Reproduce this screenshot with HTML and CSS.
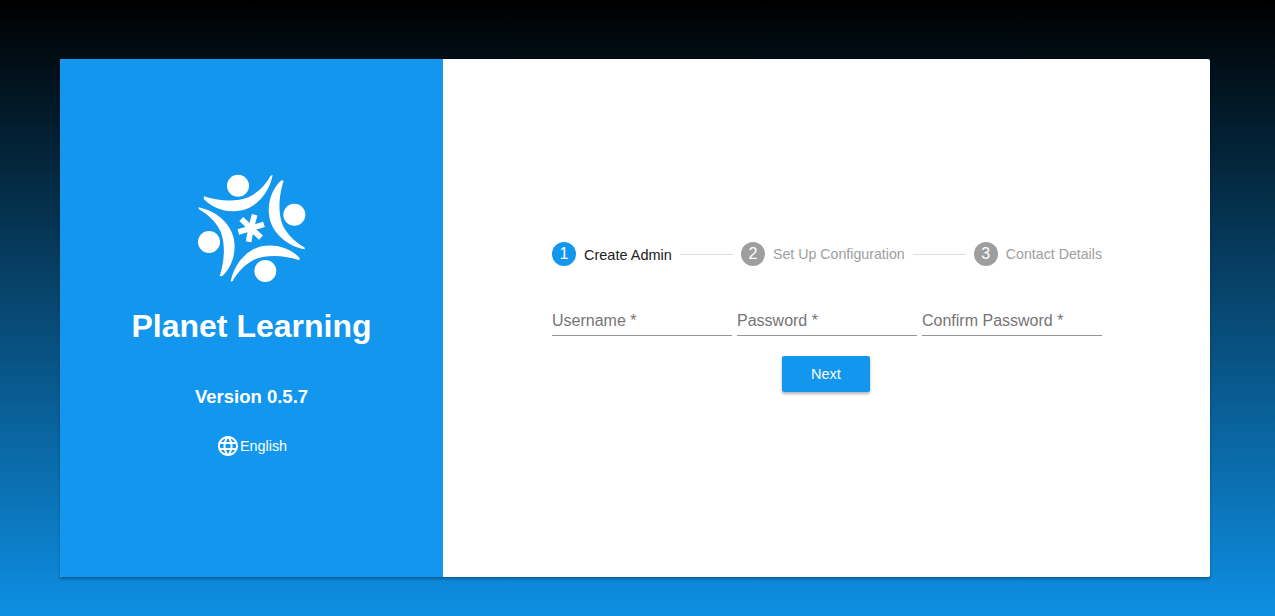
FILE: index.html
```html
<!DOCTYPE html>
<html lang="en">
<head>
    <meta charset="UTF-8">
    <meta name="viewport" content="width=device-width, initial-scale=1.0">
    <title>Planet Learning</title>
    <link rel="stylesheet" href="styles.css">
</head>
<body>
    <div class="card">
        <div class="side">
            <svg class="logo" viewBox="0 0 420 390">
                <defs>
                    <g id="person">
                        <circle cx="174" cy="77" r="33"/>
                        <path d="M72 109 C110 122 165 128 205 112 C235 98 258 72 272 47 L278 45 C268 97 232 140 186 151 C140 161 95 143 71 116 Z"/>
                    </g>
                </defs>
                <use href="#person"/>
                <use href="#person" transform="rotate(90 215 205)"/>
                <use href="#person" transform="rotate(180 215 205)"/>
                <use href="#person" transform="rotate(270 215 205)"/>
                <g class="logo-star">
                    <line x1="213" y1="205" x2="224" y2="164"/>
                    <line x1="213" y1="205" x2="252" y2="193"/>
                    <line x1="213" y1="205" x2="243" y2="233"/>
                    <line x1="213" y1="205" x2="206" y2="245"/>
                    <line x1="213" y1="205" x2="175" y2="216"/>
                    <line x1="213" y1="205" x2="184" y2="177"/>
                </g>
            </svg>
            <h1 class="title">Planet Learning</h1>
            <div class="version">Version 0.5.7</div>
            <div class="language">
                <svg class="globe" viewBox="2 2 20 20"><path d="M11.99 2C6.47 2 2 6.48 2 12s4.47 10 9.99 10C17.52 22 22 17.52 22 12S17.52 2 11.99 2zm6.93 6h-2.95c-.32-1.25-.78-2.45-1.38-3.56 1.84.63 3.37 1.91 4.33 3.56zM12 4.04c.83 1.2 1.48 2.53 1.91 3.96h-3.82c.43-1.43 1.08-2.76 1.91-3.96zM4.26 14C4.1 13.36 4 12.69 4 12s.1-1.36.26-2h3.38c-.08.66-.14 1.32-.14 2 0 .68.06 1.34.14 2H4.26zm.82 2h2.95c.32 1.25.78 2.45 1.38 3.56-1.84-.63-3.37-1.9-4.33-3.56zm2.95-8H5.08c.96-1.66 2.49-2.93 4.33-3.56C8.81 5.55 8.35 6.75 8.03 8zM12 19.96c-.83-1.2-1.48-2.53-1.91-3.96h3.82c-.43 1.43-1.08 2.76-1.91 3.96zM14.34 14H9.66c-.09-.66-.16-1.32-.16-2 0-.68.07-1.35.16-2h4.68c.09.65.16 1.32.16 2 0 .68-.07 1.34-.16 2zm.25 5.56c.6-1.11 1.06-2.31 1.38-3.56h2.95c-.96 1.65-2.49 2.93-4.33 3.56zM16.36 14c.08-.66.14-1.32.14-2 0-.68-.06-1.34-.14-2h3.38c.16.64.26 1.31.26 2s-.1 1.36-.26 2h-3.38z"/></svg>
                <span>English</span>
            </div>
        </div>
        <div class="main">
            <div class="content">
                <div class="stepper">
                    <div class="step active"><span class="step-num">1</span><span class="step-label">Create Admin</span></div>
                    <div class="step-line"></div>
                    <div class="step"><span class="step-num">2</span><span class="step-label">Set Up Configuration</span></div>
                    <div class="step-line"></div>
                    <div class="step"><span class="step-num">3</span><span class="step-label">Contact Details</span></div>
                </div>
                <div class="fields">
                    <div class="field">Username *</div>
                    <div class="field">Password *</div>
                    <div class="field">Confirm Password *</div>
                </div>
                <button class="next-button">Next</button>
            </div>
        </div>
    </div>
</body>
</html>
```

FILE: styles.css
```css
html, body {
    height: 100%;
}

body {
    margin: 0;
    font-family: "Liberation Sans", Arial, sans-serif;
    background: linear-gradient(to bottom, #000 0%, #0e8fe3 100%);
    padding: 59px 65px 39px 60px;
    box-sizing: border-box;
    overflow: hidden;
}

.card {
    display: flex;
    height: 518px;
    background-color: white;
    border-radius: 2px;
    overflow: hidden;
    box-shadow: 0 2px 3px rgba(0, 0, 0, 0.3);
}

.side {
    width: 383px;
    flex-shrink: 0;
    background-color: #1296ee;
    color: white;
    display: flex;
    flex-direction: column;
    align-items: center;
    padding-top: 101px;
    box-sizing: border-box;
}

.logo {
    width: 140px;
    height: 130px;
    fill: white;
    margin-right: 3px;
}

.logo-star line {
    stroke: white;
    stroke-width: 17;
}

.title {
    margin: 17px 0 0;
    font-size: 32px;
    line-height: 38px;
    font-weight: bold;
}

.version {
    margin-top: 41px;
    font-size: 18.5px;
    line-height: 22px;
    font-weight: bold;
}

.language {
    display: flex;
    align-items: center;
    gap: 2px;
    margin: 28px 0 0 2px;
    font-size: 14.4px;
    line-height: 20px;
}

.globe {
    width: 20px;
    height: 20px;
    fill: white;
}

.main {
    flex: 1;
    padding: 183px 108px 0 109px;
    box-sizing: border-box;
}

.stepper {
    display: flex;
    align-items: center;
    height: 24px;
}

.step {
    display: flex;
    align-items: center;
    gap: 8px;
    font-size: 14.2px;
    color: #9e9e9e;
    white-space: nowrap;
}

.step.active {
    color: #212121;
    font-size: 14.5px;
}

.step.active .step-label {
    padding-top: 2px;
}

.step-num {
    width: 24px;
    height: 24px;
    border-radius: 50%;
    background-color: #9e9e9e;
    color: white;
    font-size: 16px;
    line-height: 24px;
    text-align: center;
}

.step.active .step-num {
    background-color: #1296ee;
}

.step-line {
    flex: 1;
    height: 1px;
    background-color: #ddd;
    margin: 0 8px;
}

.fields {
    display: flex;
    gap: 5px;
    margin-top: 39px;
}

.field {
    flex: 1;
    height: 31px;
    line-height: 32px;
    font-size: 16px;
    color: #757575;
    border-bottom: 1px solid #949494;
    box-sizing: border-box;
}

.next-button {
    display: block;
    width: 88px;
    height: 36px;
    margin: 20px 0 0 230px;
    border: none;
    border-radius: 2px;
    background-color: #1296ee;
    color: white;
    font-family: inherit;
    font-size: 14.5px;
    box-shadow: 0 2px 3px rgba(0, 0, 0, 0.3);
}
```
